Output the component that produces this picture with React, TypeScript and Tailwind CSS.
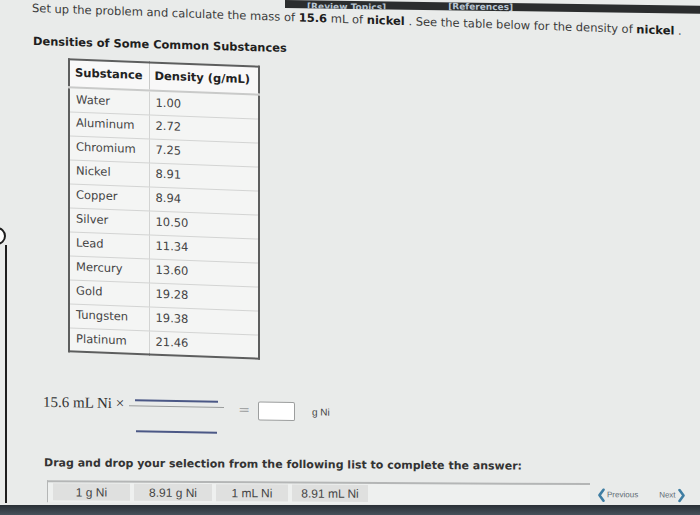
import React from 'react';

const densities: [string, string][] = [
    ['Water', '1.00'],
    ['Aluminum', '2.72'],
    ['Chromium', '7.25'],
    ['Nickel', '8.91'],
    ['Copper', '8.94'],
    ['Silver', '10.50'],
    ['Lead', '11.34'],
    ['Mercury', '13.60'],
    ['Gold', '19.28'],
    ['Tungsten', '19.38'],
    ['Platinum', '21.46'],
];

const choices = [
    { label: '1 g Ni', w: 'w-[77px]' },
    { label: '8.91 g Ni', w: 'w-[78px]' },
    { label: '1 mL Ni', w: 'w-[72px]' },
    { label: '8.91 mL Ni', w: 'w-[76px]' },
];

const Chevron = ({ dir }: { dir: 'left' | 'right' }) => (
    <svg width="7" height="14" viewBox="0 0 7 14" className="shrink-0">
        <polyline
            points={dir === 'left' ? '5.5,1.5 1.5,7 5.5,12.5' : '1.5,1.5 5.5,7 1.5,12.5'}
            fill="none"
            stroke="#3f7ea3"
            strokeWidth="2.6"
            strokeLinejoin="round"
            strokeLinecap="round"
        />
    </svg>
);

export default function App() {
    return (
        <div className="relative w-[700px] h-[515px] overflow-hidden bg-[#e9ebea] flex flex-col font-['DejaVu_Sans',sans-serif] text-[#3b3b3b]">
            {/* side handle */}
            <div className="absolute left-[-12px] top-[227px] w-[18px] h-[18px] rounded-full bg-white border-2 border-[#1e1e1e]" />
            <div className="absolute left-[5px] top-[245px] w-[2px] h-[258px] bg-[#1e1e1e]" />

            {/* top toolbar strip */}
            <div className="h-[8px] shrink-0 flex justify-end">
                <div className="w-[415px] h-[8px] bg-[#2b2d2e] origin-left skew-y-[0.8deg] flex items-end overflow-hidden text-[9px] font-bold text-[#b9c6d3] leading-[10px]">
                    <span className="ml-[22px] -mb-[3px]">[Review Topics]</span>
                    <span className="ml-[62px] mb-[-1px]">[References]</span>
                </div>
            </div>

            {/* question */}
            <p className="-mt-[8px] pl-[32px] text-[11.5px] leading-[14px] origin-left skew-y-2 whitespace-nowrap">
                Set up the problem and calculate the mass of <b className="text-[#1d1d1d]">15.6</b> mL of{' '}
                <b className="text-[#1d1d1d]">nickel</b> . See the table below for the density of{' '}
                <b className="text-[#1d1d1d]">nickel</b> .
            </p>

            <h2 className="mt-[19px] pl-[33px] text-[11.4px] leading-[14px] font-bold text-[#1f1f1f] origin-left skew-y-[1.6deg]">
                Densities of Some Common Substances
            </h2>

            {/* density table */}
            <div className="mt-[15px] ml-[68px] w-[192px] skew-y-[2.2deg]">
                <table className="w-full table-fixed border-collapse border-2 border-[#5d5e5e] bg-[#f4f5f4] text-[11.5px]">
                    <thead>
                        <tr className="h-[28px] bg-[#f8f8f8]">
                            <th className="w-[80px] px-[5px] text-left font-bold text-[#222] border-r border-b-2 border-[#c9cac9] whitespace-nowrap">Substance</th>
                            <th className="px-[5px] text-left font-bold text-[#222] border-b-2 border-[#c9cac9] whitespace-nowrap">Density (g/mL)</th>
                        </tr>
                    </thead>
                    <tbody>
                        {densities.map(([name, value]) => (
                            <tr key={name} className="h-[24px]">
                                <td className="px-[6px] border-r border-b border-[#d3d4d3] text-[#444]">{name}</td>
                                <td className="px-[6px] border-b border-[#d3d4d3] text-[#444]">{value}</td>
                            </tr>
                        ))}
                    </tbody>
                </table>
            </div>

            {/* equation */}
            <div className="mt-[36px] pl-[43px] flex items-start origin-left skew-y-1">
                <span className="mt-[1px] text-[15px] leading-[16px] font-['Liberation_Serif',serif] text-[#333] whitespace-nowrap">
                    15.6 mL Ni ×
                </span>
                <div className="ml-[5px] w-[95px] flex flex-col">
                    <div className="mx-[6px] h-[7px] border-b-2 border-[#4b5886]" />
                    <div className="mt-[4px] h-px bg-[#9a9c9c]" />
                    <div className="mx-[7px] h-[26px] border-b-2 border-[#4b5886]" />
                </div>
                <span className="ml-[14px] mt-[6px] text-[14px] leading-[14px] text-[#a3a5a5]">=</span>
                <div className="ml-[8px] mt-[5px] w-[37px] h-[19px] bg-white border border-[#9c9e9e] rounded-[2px]" />
                <span className="ml-[17px] mt-[9px] text-[10px] leading-[12px] font-['Liberation_Sans',sans-serif] text-[#444]">g Ni</span>
            </div>

            {/* answer tray */}
            <p className="mt-[26px] pl-[44px] text-[11px] leading-[14px] font-bold text-[#333] origin-left skew-y-[0.4deg]">
                Drag and drop your selection from the following list to complete the answer:
            </p>

            <div className="mt-[10px] flex items-start origin-left skew-y-[0.3deg]">
                <div className="ml-[47px] w-[543px] h-[22px] border-t-2 border-l border-[#b4b6b6] bg-[#eef0ef] flex gap-[4px] pl-[5px] pt-[1px]">
                    {choices.map((c) => (
                        <div
                            key={c.label}
                            className={`${c.w} h-[17px] bg-[#dfe0df] flex items-center justify-center text-[12px] font-['Liberation_Sans',sans-serif] text-[#454545]`}
                        >
                            {c.label}
                        </div>
                    ))}
                </div>
                <div className="ml-[8px] mt-[5px] flex items-center gap-[2px]">
                    <Chevron dir="left" />
                    <span className="text-[8px] font-['Liberation_Sans',sans-serif] text-[#5d6a73]">Previous</span>
                </div>
                <div className="ml-[21px] mt-[5px] flex items-center gap-[2px]">
                    <span className="text-[8px] font-['Liberation_Sans',sans-serif] text-[#5d6a73]">Next</span>
                    <Chevron dir="right" />
                </div>
            </div>

            {/* bottom bezel */}
            <div className="mt-auto h-[10px] shrink-0 bg-gradient-to-b from-[#2a3036] to-[#46515b]" />
        </div>
    );
}
